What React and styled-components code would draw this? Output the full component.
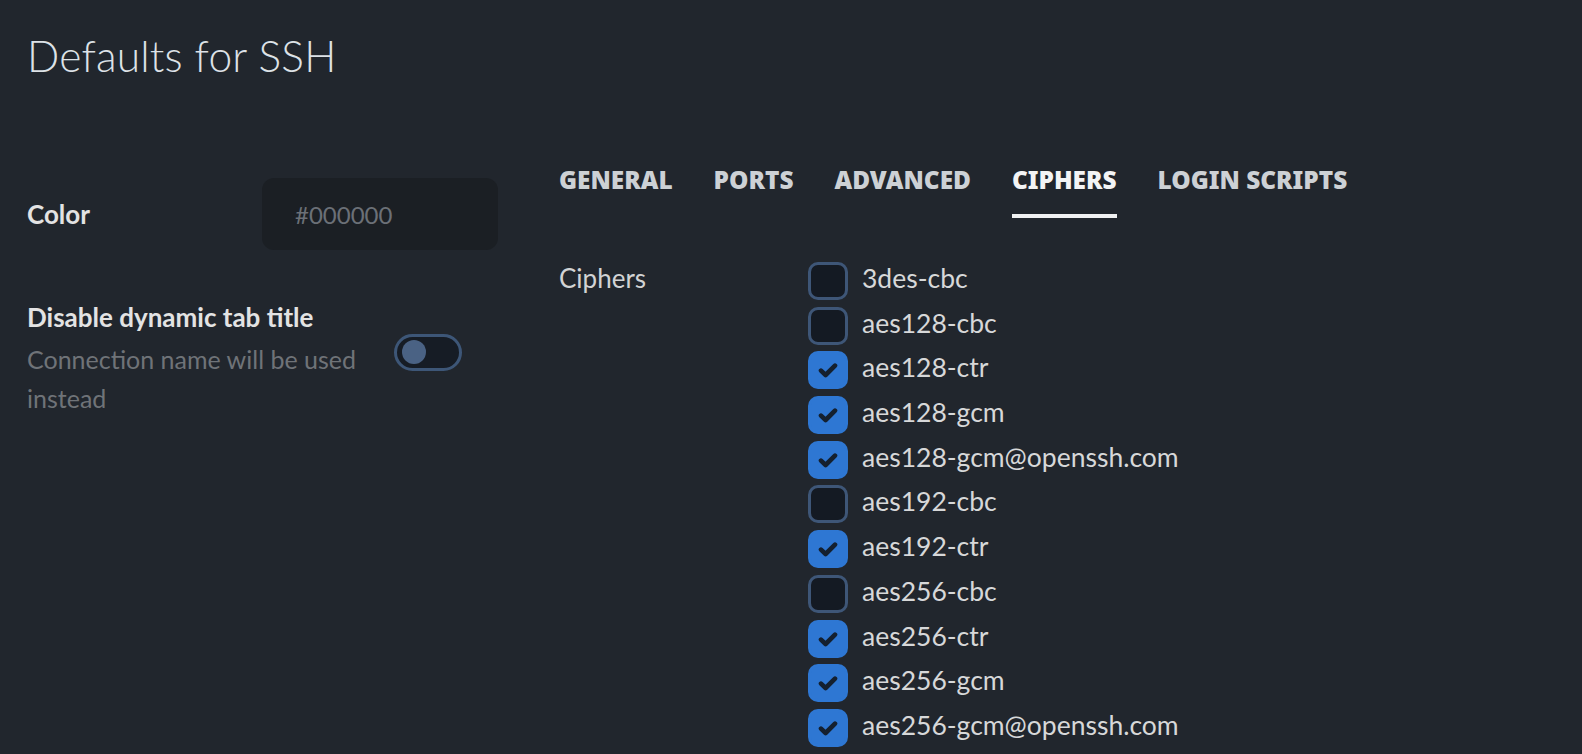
import React from "react";
import styled, { createGlobalStyle } from "styled-components";

const GlobalStyle = createGlobalStyle`
  html, body {
    margin: 0;
    padding: 0;
    background: #21262d;
  }
  body {
    font-family: "Lato", "Noto Sans", sans-serif;
    color: #dcdcdc;
    -webkit-font-smoothing: antialiased;
  }
`;

const Page = styled.div`
  min-height: 100vh;
  box-sizing: border-box;
  padding: 30.5px 0 0 27px;
  background: #21262d;
`;

const Title = styled.h1`
  margin: 0;
  font-size: 42.5px;
  line-height: 50px;
  font-weight: 300;
  color: #dde2e7;
  letter-spacing: 0.2px;
`;

const Columns = styled.div`
  display: flex;
  align-items: flex-start;
  gap: 61px;
  margin-top: 84.5px;
`;

const LeftCol = styled.div`
  width: 471px;
  padding-top: 13px;
  display: flex;
  flex-direction: column;
`;

const ColorRow = styled.div`
  display: flex;
  align-items: center;
  height: 72px;
`;

const FieldLabel = styled.div`
  font-size: 26px;
  font-weight: 700;
  color: #e3e3e3;
  line-height: ${(p) => p.$lh || "32px"};
  width: ${(p) => p.$width || "auto"};
  flex-shrink: 0;
`;

const ColorInput = styled.input`
  width: 236px;
  height: 72px;
  box-sizing: border-box;
  border: none;
  outline: none;
  border-radius: 12px;
  background: #1b1f24;
  padding: 0 0 0 33px;
  font-family: "Lato", "Noto Sans", sans-serif;
  font-size: 24px;
  color: #d0d0d0;
  &::placeholder {
    color: #6b7077;
  }
`;

const ToggleRow = styled.div`
  display: flex;
  align-items: flex-start;
  margin-top: 48.4px;
`;

const ToggleText = styled.div`
  width: 355px;
  margin-right: 12px;
`;

const Hint = styled.div`
  margin-top: 3px;
  font-size: 25px;
  line-height: 39px;
  color: #6f7378;
`;

const Switch = styled.button`
  margin-top: 35.6px;
  width: 68px;
  height: 37px;
  box-sizing: border-box;
  padding: 0 0 0 5px;
  border: 3px solid #3d5677;
  border-radius: 999px;
  background: #161c25;
  display: flex;
  align-items: center;
  justify-content: ${(p) => (p.$on ? "flex-end" : "flex-start")};
  cursor: pointer;
`;

const Knob = styled.span`
  width: 24px;
  height: 24px;
  border-radius: 50%;
  background: #4a6284;
`;

const RightCol = styled.div`
  display: flex;
  flex-direction: column;
`;

const Tabs = styled.div`
  display: flex;
  gap: 41px;
`;

const Tab = styled.div`
  font-family: "Noto Sans", "Lato", sans-serif;
  font-size: 24.4px;
  font-weight: 900;
  line-height: 30px;
  letter-spacing: 0;
  padding-bottom: 19px;
  border-bottom: 4px solid ${(p) => (p.$active ? "#f0f1f2" : "transparent")};
  color: ${(p) => (p.$active ? "#f3f4f5" : "#cdd1d5")};
  text-transform: uppercase;
  white-space: nowrap;
  cursor: pointer;
`;

const CipherGrid = styled.div`
  display: grid;
  grid-template-columns: 249px auto;
  margin-top: 44px;
`;

const SectionLabel = styled.div`
  font-size: 26px;
  line-height: 32px;
  padding-bottom: 6px;
  color: #d2d3d4;
`;

const CipherList = styled.div`
  display: flex;
  flex-direction: column;
  gap: 6.7px;
`;

const CipherRow = styled.label`
  display: flex;
  align-items: center;
  height: 38px;
  cursor: pointer;
`;

const Box = styled.span`
  width: 40px;
  height: 38px;
  box-sizing: border-box;
  border-radius: 10px;
  flex-shrink: 0;
  display: flex;
  align-items: center;
  justify-content: center;
  border: 3px solid ${(p) => (p.$checked ? "#2e77d3" : "#3e5677")};
  background: ${(p) => (p.$checked ? "#2e77d3" : "#141a23")};
`;

const CipherName = styled.span`
  margin-left: 14px;
  font-size: 26.5px;
  line-height: 32px;
  padding-bottom: 6px;
  color: #d7d8d9;
  white-space: nowrap;
`;

const CheckIcon = () => (
  <svg width="20" height="16" viewBox="0 0 20 16" aria-hidden="true">
    <path
      d="M3 8.6 L7.6 13 L17 3.6"
      fill="none"
      stroke="#14202f"
      strokeWidth="4.6"
      strokeLinecap="round"
      strokeLinejoin="round"
    />
  </svg>
);

const tabs = ["General", "Ports", "Advanced", "Ciphers", "Login Scripts"];

const ciphers = [
  ["3des-cbc", false],
  ["aes128-cbc", false],
  ["aes128-ctr", true],
  ["aes128-gcm", true],
  ["aes128-gcm@openssh.com", true],
  ["aes192-cbc", false],
  ["aes192-ctr", true],
  ["aes256-cbc", false],
  ["aes256-ctr", true],
  ["aes256-gcm", true],
  ["aes256-gcm@openssh.com", true],
];

export default function App() {
  return (
    <>
      <GlobalStyle />
      <Page>
        <Title>Defaults for SSH</Title>
        <Columns>
          <LeftCol>
            <ColorRow>
              <FieldLabel $width="235px">Color</FieldLabel>
              <ColorInput placeholder="#000000" />
            </ColorRow>
            <ToggleRow>
              <ToggleText>
                <FieldLabel $lh="39px">Disable dynamic tab title</FieldLabel>
                <Hint>Connection name will be used instead</Hint>
              </ToggleText>
              <Switch type="button" aria-pressed="false">
                <Knob />
              </Switch>
            </ToggleRow>
          </LeftCol>
          <RightCol>
            <Tabs>
              {tabs.map((t) => (
                <Tab key={t} $active={t === "Ciphers"}>
                  {t}
                </Tab>
              ))}
            </Tabs>
            <CipherGrid>
              <SectionLabel>Ciphers</SectionLabel>
              <CipherList>
                {ciphers.map(([name, checked]) => (
                  <CipherRow key={name}>
                    <Box $checked={checked}>{checked && <CheckIcon />}</Box>
                    <CipherName>{name}</CipherName>
                  </CipherRow>
                ))}
              </CipherList>
            </CipherGrid>
          </RightCol>
        </Columns>
      </Page>
    </>
  );
}
